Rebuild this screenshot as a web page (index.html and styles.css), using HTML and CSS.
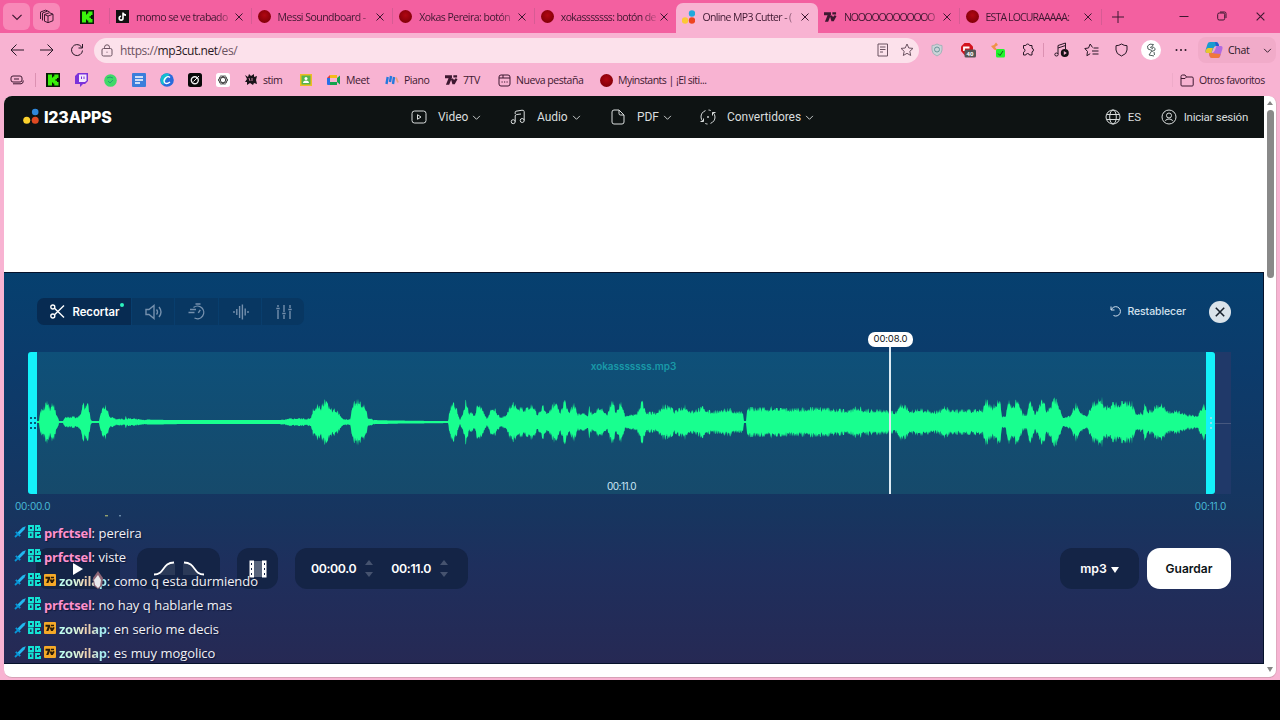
FILE: index.html
```
<!DOCTYPE html>
<html lang="es">
<head>
    <meta charset="UTF-8">
    <title>Online MP3 Cutter</title>
    <link rel="stylesheet" href="styles.css">
</head>
<body>
    <svg class="defs" width="0" height="0">
        <symbol id="x" viewBox="0 0 10 10"><path d="M1.5 1.5l7 7M8.5 1.5l-7 7"/></symbol>
        <symbol id="chev" viewBox="0 0 10 10"><path d="M1.2 3.2L5 7l3.800-3.800"/></symbol>
        <symbol id="kick" viewBox="0 0 14 14"><path d="M0 0h14v14H0z" fill="#0a1a08" stroke="none"/><path d="M2 1.500h4v3h1v-1h1.300V1.500H12.500V5H11v1.200H9.500v1.600H11V9h1.500v3.500H8.300v-2H7v-1H6v3H2z" fill="#3bf20c" stroke="none"/></symbol>
        <symbol id="seven" viewBox="0 0 14 12"><path d="M0 1h7.500v2.500L4.500 11H1l2.800-7H0zM9 1h4v2.200H9zM6.500 5.500L8.300 4l1.500 2 1.500-2L13.500 5 10.500 10.500H8z" fill="currentColor" stroke="none"/></symbol>
        <symbol id="sword" viewBox="0 0 12 12"><path d="M11.800.3L10.500 3.500 5.300 8.800 3.300 6.800 8.500 1.500z" fill="#22b8ef" stroke="none"/><path d="M1.800 5.800l4.400 4.400M3.700 8.300L1 11" stroke="#0796d8" stroke-width="1.800"/></symbol>
        <symbol id="blocks" viewBox="0 0 13 13"><path d="M1 1h4v4H1zM12 1H8v4h4V3.200h-2M1 7.500h3.500V12H1zM12 8H8v4h4V10" stroke="#13e5d5" stroke-width="1.900"/></symbol>
        <symbol id="badge" viewBox="0 0 12 12"><rect width="12" height="12" rx="1" fill="#f5a928" stroke="none"/><path d="M1.500 2.800h4.700v1.700L4.400 9H2.200l1.600-4.300H1.500zM7 2.800h3v1.400H7zM5.800 6l1.300-1 1 1.300 1-1.300 1.600.7L8.800 9H7z" fill="#2b1c08" stroke="none"/></symbol>
    </svg>

    <div class="browser">
        <div class="tabstrip">
            <div class="strip-buttons">
                <button class="strip-btn"><svg width="12" height="12"><use href="#chev"/></svg></button>
                <button class="strip-btn"><svg width="16" height="16" viewBox="0 0 16 16"><path d="M5.500 5.500l5-1.800 3.500 1.500v6.500l-5 2-3.500-1.500zM9 7l5-1.800M9 7v6.500M9 7L5.500 5.500M3.500 11.500V4l5-1.900 2 .7M1.500 10V3l5-1.800 2 .6"/></svg></button>
            </div>
            <div class="pinned"><svg width="14" height="14"><use href="#kick"/></svg></div>
            <div class="tab"><svg class="fav" width="13" height="13" viewBox="0 0 13 13"><path d="M0 0h13v13H0z" fill="#111" stroke="none"/><path d="M7 2.500v5.700a1.900 1.900 0 1 1-1.900-1.900M7 2.800q.5 2.200 3 2.300" stroke="#fff" stroke-width="1.600"/></svg><span class="title">momo se ve trabado</span><svg class="close" width="10" height="10"><use href="#x"/></svg></div>
            <div class="tab"><i class="fav instants"></i><span class="title">Messi Soundboard -</span><svg class="close" width="10" height="10"><use href="#x"/></svg></div>
            <div class="tab"><i class="fav instants"></i><span class="title">Xokas Pereira: botón</span><svg class="close" width="10" height="10"><use href="#x"/></svg></div>
            <div class="tab"><i class="fav instants"></i><span class="title long">xokasssssss: botón de</span><svg class="close" width="10" height="10"><use href="#x"/></svg></div>
            <div class="tab active"><svg class="fav" width="13" height="14" viewBox="0 0 13 14"><g stroke="none"><circle cx="10" cy="3.500" r="3.200" fill="#23a9dc"/><circle cx="3" cy="10.500" r="3.200" fill="#fcc937"/><circle cx="10" cy="10.500" r="3.200" fill="#ee4420"/></g></svg><span class="title long">Online MP3 Cutter - (</span><svg class="close" width="10" height="10"><use href="#x"/></svg></div>
            <div class="tab"><svg class="fav" width="13" height="12"><use href="#seven"/></svg><span class="title narrow">NOOOOOOOOOOOO</span><svg class="close" width="10" height="10"><use href="#x"/></svg></div>
            <div class="tab"><i class="fav instants"></i><span class="title caps">ESTA LOCURAAAAA:</span><svg class="close" width="10" height="10"><use href="#x"/></svg></div>
            <button class="new-tab"><svg width="12" height="12" viewBox="0 0 12 12"><path d="M6 0v12M0 6h12"/></svg></button>
            <div class="window-buttons">
                <svg width="10" height="10" viewBox="0 0 10 10"><path d="M.5 5.500h9"/></svg>
                <svg width="10" height="10" viewBox="0 0 10 10"><rect x=".7" y="2" width="7" height="7" rx="1.500"/><path d="M3 1h4.500Q9 1 9 2.500V7"/></svg>
                <svg width="11" height="11"><use href="#x"/></svg>
            </div>
        </div>

        <div class="toolbar">
            <svg width="14" height="14" viewBox="0 0 14 14"><path d="M14 7H1M6.500 1.500L1 7l5.500 5.500"/></svg>
            <svg width="14" height="14" viewBox="0 0 14 14"><path d="M0 7h13M7.500 1.500L13 7l-5.500 5.500"/></svg>
            <svg width="14" height="14" viewBox="0 0 14 14"><path d="M12.500 7.500A5.500 5.500 0 1 1 11.200 3.500L12.500 5M12.500 1v4H8.500"/></svg>
            <div class="address">
                <svg class="lock" width="12" height="13" viewBox="0 0 12 13"><rect x="1" y="4.500" width="10" height="7.500" rx="1.500"/><path d="M3.500 4.500V3.300a2.500 2.500 0 0 1 5 0v1.200M6 7.700v1"/></svg>
                <span class="url">https://<b>mp3cut.net</b>/es/</span>
                <svg width="12" height="14" viewBox="0 0 12 14"><path d="M1 1h9.500v12H1zM3 4h5.500M3 6.500h5.500M3 9h3"/></svg>
                <svg width="14" height="14" viewBox="0 0 14 14"><path d="M7 1l1.800 4 4.200.4-3.200 2.900.9 4.200L7 10.300l-3.700 2.200.9-4.200L1 5.400 5.200 5z"/></svg>
            </div>
            <svg width="12" height="14" viewBox="0 0 12 14"><path d="M6 1q2.500 1.500 5 1.500V7q0 4-5 6-5-2-5-6V2.500Q3.500 2.500 6 1z" fill="#cbd3d8" stroke="#a3b2b8"/><circle cx="6" cy="6.500" r="2.500" stroke="#6b959b"/></svg>
            <svg width="16" height="16" viewBox="0 0 16 16"><path d="M4.500 1h5L13 4.500V9L9.500 13h-5L1 9V4.500z" fill="#d4131d" stroke="none"/><path d="M4 9V5.500h5.500" stroke="#fff" stroke-width="1.800"/><rect x="4.500" y="7.500" width="11.500" height="8" rx="1.500" fill="#555" stroke="none"/><text x="6.500" y="14" class="count">40</text></svg>
            <svg width="16" height="16" viewBox="0 0 16 16"><path d="M1 4l3-1 2-2.500L8 3 5 5l3 4-4-1.500z" fill="#ef9148" stroke="none"/><rect x="6" y="7" width="9" height="8.500" rx="1.500" fill="#20f52c" stroke="none"/><path d="M8 11.500l2 2 3-4.500" stroke="#145c18"/></svg>
            <svg width="14" height="14" viewBox="0 0 14 14"><path d="M2.500 2.500h2.300a1.900 1.900 0 0 1 3.700 0H11v2.700a1.900 1.900 0 0 1 0 3.700V12H8.500a1.900 1.900 0 0 0-3.700 0H2.500V9.200a1.900 1.900 0 0 0 0-3.700z"/></svg>
            <i class="sep"></i>
            <svg width="15" height="16" viewBox="0 0 15 16"><path d="M4 12V3.500L11.500 1v6M4 6l7.500-2.500"/><ellipse cx="2.500" cy="12.500" rx="1.700" ry="1.500"/><circle cx="10.800" cy="11" r="4" fill="#141014" stroke="none"/><path d="M9.800 9l3 2-3 2z" fill="#f8b4d3" stroke="none"/></svg>
            <svg width="15" height="14" viewBox="0 0 15 14"><path d="M8.500 4.500L6.200 1 4.500 5 .8 5.500l2.700 3-.6 4.200 3.300-2M9.500 5h5M8 8h6.500M8.500 11h6"/></svg>
            <svg width="13" height="14" viewBox="0 0 13 14"><path d="M6.500 1q2.500 1.700 5.500 1.700V7q0 4-5.500 6Q1 11 1 7V2.700Q4 2.700 6.500 1z"/></svg>
            <span class="avatar"><svg width="14" height="16" viewBox="0 0 14 16"><path d="M3.500 4q2-3 6-1.500L7.500 5q4 0 3.500 3L8 9.500M3.500 4l.5 3 4 1.500-3 4.500 5 1M6 5l3 2M10 10l.5 3" stroke="#52615e"/></svg></span>
            <svg width="12" height="4" viewBox="0 0 12 4"><g fill="#271725" stroke="none"><circle cx="1.500" cy="2" r="1"/><circle cx="6" cy="2" r="1"/><circle cx="10.500" cy="2" r="1"/></g></svg>
            <div class="copilot">
                <svg width="18" height="18" viewBox="0 0 18 18"><g stroke="none"><path d="M5 1h6q2 0 2.500 2L14 5h-3q-2 0-3 3l-1.500 4H2Q0 12 .6 9L2.500 3Q3 1 5 1z" fill="#1a9bcf"/><path d="M2.800 7h5L6.500 12H2Q0 12 .6 9z" fill="#e8c62e"/><path d="M13 17H7q-2 0-2.500-2L4 12h3q2 0 3-3l1.500-4H16q2 0 1.400 3L15.500 14q-.5 3-2.500 3z" fill="#b16be0"/><path d="M15.500 13q-.5 4-2.500 4H7q-2 0-2.500-2L4 12h3q2 0 3 .5z" fill="#f0783e"/><path d="M10 1q3 0 3.500 2L14 5h-3z" fill="#2759d1"/></g></svg>
                <span>Chat</span>
                <svg width="9" height="9"><use href="#chev"/></svg>
            </div>
        </div>

        <div class="favorites">
            <svg width="14" height="10" viewBox="0 0 14 10"><rect x="1" y="1" width="11" height="6" rx="2"/><path d="M4 4h5M3 8.800h8q2.300 0 2.300-3.300"/></svg>
            <i class="sep"></i>
            <svg width="14" height="14"><use href="#kick"/></svg>
            <svg width="13" height="14" viewBox="0 0 13 14"><path d="M3 0h10v8l-3 3H8l-3 3v-3H0V3z" fill="#7b32d9" stroke="none"/><path d="M4 1.500h7.500v6L10 9H4z" fill="#f3e7fc" stroke="none"/><path d="M6.500 3.500V6M9 3.500V6" stroke="#7b32d9"/></svg>
            <svg width="13" height="13" viewBox="0 0 13 13"><circle cx="6.500" cy="6.500" r="6.300" fill="#3fd968" stroke="none"/><path d="M3 4q3-2 6 0M4 7l2 2 3-3" stroke="#239b75"/></svg>
            <svg width="14" height="14" viewBox="0 0 14 14"><rect width="14" height="14" rx="1" fill="#3b7edb" stroke="none"/><path d="M3 4h8M3 7h8M3 10h5" stroke="#fff" stroke-width="1.300"/></svg>
            <svg width="14" height="14" viewBox="0 0 14 14"><circle cx="7" cy="7" r="6.800" fill="#286bdc" stroke="none"/><path d="M.5 7a6.500 6.500 0 0 1 9-6L3 12Q.5 10 .5 7z" fill="#13bed0" stroke="none"/><path d="M10 4.500Q8 2.500 5.500 5T5 10q2 1.500 5-1" stroke="#fff" stroke-width="1.400"/></svg>
            <svg width="14" height="14" viewBox="0 0 14 14"><rect width="14" height="14" rx="2.500" fill="#090909" stroke="none"/><circle cx="6.800" cy="7.200" r="3.500" stroke="#eee" stroke-width="1.400"/><path d="M5.500 8.500L11 3" stroke="#eee"/></svg>
            <svg width="14" height="14" viewBox="0 0 14 14"><rect width="14" height="14" rx="2.500" fill="#fff" stroke="none"/><g stroke="#333" stroke-width=".8"><ellipse cx="7" cy="7" rx="4.600" ry="2.500"/><ellipse cx="7" cy="7" rx="4.600" ry="2.500" transform="rotate(60 7 7)"/><ellipse cx="7" cy="7" rx="4.600" ry="2.500" transform="rotate(120 7 7)"/></g></svg>
            <div class="bookmark"><svg width="14" height="14" viewBox="0 0 14 14"><path d="M1 2l3 2 1-3 2 2 3-2v3l3-1-1 4 1 4-3-1-1 2-3-2-3 2V9L1 9l2-3z" fill="#191319" stroke="none"/><path d="M5 5l1 3M8 5v3" stroke="#c887a5"/></svg>stim</div>
            <svg width="12" height="12" viewBox="0 0 12 12"><path d="M0 0h12v12H0z" fill="#ecbd24" stroke="none"/><path d="M1.500 1.500h9v9h-9z" fill="#55b54b" stroke="none"/><circle cx="6" cy="4.500" r="1.500" fill="#fff" stroke="none"/><path d="M3 9q0-2.500 3-2.500T9 9z" fill="#fff" stroke="none"/></svg>
            <div class="bookmark"><svg width="14" height="12" viewBox="0 0 14 12"><g stroke="none"><path d="M3 1h7v3H3z" fill="#f5bb19"/><path d="M0 4l3-3v7H0z" fill="#e53c36"/><path d="M0 4h3v7H1q-1 0-1-1z" fill="#276fe8"/><path d="M3 8h7v3H3zM10 4l3-2.500v9L10 8z" fill="#14a34c"/></g></svg>Meet</div>
            <div class="bookmark"><svg width="14" height="11" viewBox="0 0 14 11"><path d="M1.500 9l1.200-7M5 7l1-6M8 9l1-7" stroke="#2479dd" stroke-width="2.400"/><path d="M11 2.500l2 5" stroke="#eaa27d" stroke-width="1.800"/></svg>Piano</div>
            <div class="bookmark"><svg width="13" height="12"><use href="#seven"/></svg>7TV</div>
            <div class="bookmark"><svg width="13" height="13" viewBox="0 0 13 13"><rect x="1" y="1" width="11" height="11" rx="2"/><path d="M1 4h11M3.500 8h1.200M6 8h1.200M8.500 8h1.200M5 1v3"/></svg>Nueva pestaña</div>
            <div class="bookmark tight"><i class="instants"></i>Myinstants | ¡El siti...</div>
            <i class="sep faint"></i>
            <div class="bookmark others"><svg width="14" height="13" viewBox="0 0 14 13"><path d="M1 2.500Q1 1 2.500 1H5l1.500 2H12q1.200 0 1.200 1.200V11q0 1-1 1H2q-1 0-1-1zM1 4.500h4L6.500 3"/></svg>Otros favoritos</div>
        </div>

        <div class="viewport">
            <div class="page">
                <header>
                    <div class="logo"><svg width="17" height="17" viewBox="0 0 17 17"><g stroke="none"><circle cx="12.200" cy="4" r="3.300" fill="#2f86d9"/><circle cx="3.700" cy="12.200" r="3.500" fill="#fbd22d"/><circle cx="12.200" cy="12.200" r="3.500" fill="#e04a22"/></g></svg><span>I23APPS</span></div>
                    <nav>
                        <a><svg width="16" height="16" viewBox="0 0 16 16"><rect x="1" y="2" width="14" height="12" rx="2.500"/><path d="M6.500 5.700l3.500 2.300-3.500 2.300z"/></svg><span>Video</span><svg width="9" height="9"><use href="#chev"/></svg></a>
                        <a><svg width="16" height="16" viewBox="0 0 16 16"><circle cx="3.200" cy="12.700" r="2"/><circle cx="12.200" cy="11.500" r="2"/><path d="M5.200 12.700V7M5.200 5V3.200q0-.8.800-1l6-1q2.200-.2 2.200 1.500v8.800M5.200 7q0-1.300 1.500-1.500L11 5"/></svg><span>Audio</span><svg width="9" height="9"><use href="#chev"/></svg></a>
                        <a><svg width="16" height="16" viewBox="0 0 16 16"><path d="M9 1H4Q2 1 2 3v10q0 2 2 2h8q2 0 2-2V6zM9 1v3.500Q9 6 10.500 6H14"/></svg><span>PDF</span><svg width="9" height="9"><use href="#chev"/></svg></a>
                        <a><svg width="16" height="16" viewBox="0 0 16 16"><path d="M5.500 1.600Q1 3.500 1 8q0 2.500 2 4.500M.5 12.500h3v-3M10.500 14.400Q15 12.500 15 8q0-2.500-2-4.500M15.500 3.500h-3v3M8.500 1q1.300.1 2.200.5M7.500 15q-1.300-.1-2.200-.5"/><circle cx="8" cy="8" r=".6"/></svg><span>Convertidores</span><svg width="9" height="9"><use href="#chev"/></svg></a>
                    </nav>
                    <div class="account">
                        <svg width="16" height="16" viewBox="0 0 16 16"><circle cx="8" cy="8" r="7"/><ellipse cx="8" cy="8" rx="3.300" ry="7"/><path d="M1.600 5.500h12.800M1.600 10.500h12.800"/></svg><span>ES</span>
                        <svg class="user" width="16" height="16" viewBox="0 0 16 16"><circle cx="8" cy="8" r="7"/><circle cx="8" cy="6.500" r="2.500"/><path d="M4.500 12q0-2 3.500-2t3.500 2"/></svg><span>Iniciar sesión</span>
                    </div>
                </header>
                <div class="ad"></div>
                <main class="editor">
                    <div class="tools">
                        <div class="modes">
                            <div class="mode selected"><svg width="15" height="15" viewBox="0 0 15 15"><circle cx="2.800" cy="3" r="2"/><circle cx="2.800" cy="12" r="2"/><path d="M4.500 4.300L14 13.500M4.500 10.700L14 1.500"/></svg>Recortar</div>
                            <div class="mode"><svg width="18" height="16" viewBox="0 0 18 16"><path d="M1 5.500h3L9 1.500v13L4 10.500H1zM11.500 5.500q2 2.500 0 5M14 3q4 5 0 10"/></svg></div>
                            <div class="mode"><svg width="18" height="18" viewBox="0 0 18 18"><path d="M7.500 1h5M5.500 4.500A6.300 6.300 0 1 1 6.500 15M2 6.500h6M.5 9.500h6M10.300 9.800l2-3"/></svg></div>
                            <div class="mode"><svg width="16" height="16" viewBox="0 0 16 16"><path d="M1 7v2M3.800 5v6M6.600 2v12M9.400 .5v15M12.200 4.500v7M15 7v2"/></svg></div>
                            <div class="mode"><svg width="16" height="16" viewBox="0 0 16 16"><path d="M2 1v2M2 6v9M8 1v7M8 11v4M14 1v3M14 7v8M.3 4.500h3.400M6.300 9.500h3.400M12.300 5.500h3.400"/></svg></div>
                        </div>
                        <div class="reset"><svg width="12" height="12" viewBox="0 0 12 12"><path d="M1 .5v3.500h3.500M1.300 3.800A4.700 4.700 0 1 1 3.500 9.500"/></svg>Restablecer</div>
                        <button class="dismiss"><svg width="12" height="12"><use href="#x"/></svg></button>
                    </div>
                    <div class="track">
                        <div class="handle left"><i></i><i></i></div>
                        <div class="selection">
                            <span class="filename">xokasssssss.mp3</span>
                            <svg id="wave" width="1169" height="60" viewBox="0 0 1169 60"></svg>
                            <span class="length">00:11.0</span>
                        </div>
                        <div class="handle right"><i></i></div>
                        <div class="rest"></div>
                        <div class="playhead"><span>00:08.0</span></div>
                    </div>
                    <div class="times"><span>00:00.0</span><span>00:11.0</span></div>
                    <div class="controls">
                        <button class="ctl play"><svg width="12" height="14" viewBox="0 0 12 14"><path d="M1 1l10 6-10 6z" fill="#fff" stroke="none"/></svg></button>
                        <button class="ctl fades">
                            <svg width="22" height="15" viewBox="0 0 22 15"><path d="M6 14q5-3 8-12h8v12z" fill="#fff" fill-opacity=".1" stroke="none"/><path d="M1 13.500C12 13.500 9 1.500 21 1.500"/></svg>
                            <svg width="22" height="15" viewBox="0 0 22 15"><path d="M0 2h8q3 9 8 12H0z" fill="#fff" fill-opacity=".1" stroke="none"/><path d="M1 1.500C13 1.500 10 13.500 21 13.500"/></svg>
                        </button>
                        <button class="ctl clip"><svg width="18" height="18" viewBox="0 0 18 18"><path d="M5 1h8v16H5z" fill="#fff" fill-opacity=".3" stroke="none"/><path d="M.5.5h4.500v17H.5zM13 .5h4.500v17H13z" fill="#fff" stroke="none"/><path d="M2.500 3v13M15.500 3v13" stroke="#132347" stroke-dasharray="2 3"/></svg></button>
                        <div class="ctl range">
                            <span>00:00.0</span><div class="spin"><i></i><i></i></div>
                            <span>00:11.0</span><div class="spin"><i></i><i></i></div>
                        </div>
                        <button class="ctl format">mp3<i></i></button>
                        <button class="save">Guardar</button>
                    </div>
                </main>
                <div class="page-end"></div>
            </div>
            <div class="scrollbar"><i class="up"></i><div class="thumb"></div><i class="down"></i></div>
        </div>
    </div>

    <div class="chat">
        <p><svg width="12" height="12"><use href="#sword"/></svg><svg width="13" height="13"><use href="#blocks"/></svg><b class="pink">prfctsel</b><span>: pereira</span></p>
        <p><svg width="12" height="12"><use href="#sword"/></svg><svg width="13" height="13"><use href="#blocks"/></svg><b class="pink">prfctsel</b><span>: viste</span></p>
        <p><svg width="12" height="12"><use href="#sword"/></svg><svg width="13" height="13"><use href="#blocks"/></svg><svg width="12" height="12"><use href="#badge"/></svg><b class="shine">zowilap</b><span>: como q esta durmiendo</span></p>
        <p><svg width="12" height="12"><use href="#sword"/></svg><svg width="13" height="13"><use href="#blocks"/></svg><b class="pink">prfctsel</b><span>: no hay q hablarle mas</span></p>
        <p><svg width="12" height="12"><use href="#sword"/></svg><svg width="13" height="13"><use href="#blocks"/></svg><svg width="12" height="12"><use href="#badge"/></svg><b class="shine">zowilap</b><span>: en serio me decis</span></p>
        <p><svg width="12" height="12"><use href="#sword"/></svg><svg width="13" height="13"><use href="#blocks"/></svg><svg width="12" height="12"><use href="#badge"/></svg><b class="shine">zowilap</b><span>: es muy mogolico</span></p>
    </div>
    <svg class="scrolled" width="18" height="2" viewBox="0 0 18 2"><path d="M0 .8h3" stroke="#c9cf76"/><path d="M14 .8h2" stroke="#8fb0c8"/></svg>
    <svg class="cursor" width="12" height="18" viewBox="0 0 12 18"><path d="M6 0l5 7-1 8-4 3-4-3-1-8z" fill="#8d6575" stroke="none"/><path d="M6 4l3 5-1 6-2 2-3-3-1-5z" fill="#e8e9ed" stroke="none"/></svg>

    <script src="wave.js"></script>
</body>
</html>
```
FILE: styles.css
```
* { box-sizing: border-box; }
body {
    margin: 0;
    width: 1280px;
    height: 720px;
    overflow: hidden;
    background: #000;
    font-family: "Open Sans", "Noto Sans", sans-serif;
    font-size: 11px;
    color: #3d1830;
}
svg {
    display: block;
    flex: none;
    fill: none;
    stroke: currentColor;
    stroke-width: 1;
}
.defs { position: absolute; }
button {
    border: 0;
    padding: 0;
    background: none;
    color: inherit;
    font: inherit;
    display: flex;
    align-items: center;
    justify-content: center;
}
.browser {
    height: 680px;
    background: #f8b3d2;
    display: flex;
    flex-direction: column;
}

/* tabs */
.tabstrip {
    height: 33px;
    flex: none;
    background: #f360a0;
    display: flex;
    align-items: center;
    white-space: nowrap;
}
.strip-buttons { display: flex; gap: 3px; width: 64px; padding-left: 3px; }
.strip-btn {
    width: 27px;
    height: 27px;
    border-radius: 6px;
    background: #f889b8;
}
.pinned { width: 46px; padding-left: 16px; }
.tab {
    width: 141.6px;
    height: 30px;
    margin-top: 3px;
    padding: 0 8px 3px 6px;
    display: flex;
    align-items: center;
    position: relative;
}
.tab::before {
    content: "";
    position: absolute;
    left: -1px;
    top: 5px;
    width: 1px;
    height: 16px;
    background: #d75b94;
}
.tab .fav { width: 13px; flex: none; }
.tab .title {
    flex: 1;
    margin-left: 7px;
    font-size: 10.5px;
    letter-spacing: -0.52px;
    -webkit-mask-image: linear-gradient(90deg, #000 85%, rgba(0, 0, 0, 0.2));
    mask-image: linear-gradient(90deg, #000 85%, rgba(0, 0, 0, 0.2));
}
.tab .title.long { letter-spacing: -0.62px; }
.tab .title.narrow { letter-spacing: -1.2px; }
.tab .title.caps { letter-spacing: -0.85px; }
.tab .close { margin-left: 3px; }
.tab.active {
    background: #f8b3d2;
    border-radius: 7px 7px 0 0;
}
.tab.active::before, .tab.active + .tab::before { display: none; }
.instants {
    display: block;
    width: 13px;
    height: 13px;
    border-radius: 50%;
    background: radial-gradient(circle at 50% 40%, #b00712, #850009 70%);
}
.new-tab { width: 33px; height: 16px; border-left: 1px solid #d75b94; }
.window-buttons {
    flex: 1;
    display: flex;
    justify-content: flex-end;
    gap: 28px;
    padding-right: 14px;
}

/* toolbar */
.toolbar {
    height: 34px;
    flex: none;
    display: grid;
    grid-template-columns: 30px 30px 30px 829px 32px 29px 31px 29px 3px 33px 27px 32px 27px 34px 78px;
    padding-left: 2px;
    align-items: center;
    justify-items: center;
    color: #271725;
}
.address {
    width: 825px;
    height: 25px;
    border-radius: 13px;
    background: #fce1eb;
    display: flex;
    align-items: center;
    padding: 0 5px 0 7px;
    color: #6b5361;
}
.address svg:last-child { margin-left: 11px; }
.url { flex: 1; margin-left: 7px; font-size: 12px; letter-spacing: -0.42px; }
.url b { font-weight: 400; color: #281822; }
.count { font-size: 6px; font-weight: 700; fill: #fff; stroke: none; }
.sep { width: 1px; height: 14px; background: #dc91b2; }
.sep.faint { background: #eeabc9; }
.avatar {
    width: 20px;
    height: 20px;
    border-radius: 50%;
    background: #fff;
    display: flex;
    align-items: center;
    justify-content: center;
}
.copilot {
    width: 78px;
    height: 26px;
    border-radius: 8px;
    background: #f1abc9;
    display: flex;
    align-items: center;
    padding: 0 4px 0 7px;
}
.copilot span { flex: 1; margin-left: 5px; font-size: 10.5px; letter-spacing: -0.3px; }

/* favorites */
.favorites {
    height: 29px;
    flex: none;
    padding: 0 0 3px 2px;
    display: grid;
    grid-template-columns: 29px 8px 28px 29px 28px 29px 28px 28px 28px 54px 29px 58px 60px 53px 101px 576px 8px 92px;
    align-items: center;
    justify-items: center;
    font-size: 10.5px;
    white-space: nowrap;
}
.bookmark {
    justify-self: start;
    margin-left: 7px;
    display: flex;
    align-items: center;
    gap: 5px;
    letter-spacing: -0.45px;
}
.bookmark.tight { margin-left: 8px; letter-spacing: -0.53px; }
.bookmark.others { margin-left: 4px; letter-spacing: -0.5px; }

/* viewport */
.viewport {
    height: 582px;
    margin-left: 4px;
    width: 1273px;
    border-radius: 8px;
    overflow: hidden;
    background: #fff;
    display: flex;
    border-right: 1px solid #e0a8bf;
    border-bottom: 1px solid #d7a1b7;
}
.page {
    width: 1260px;
    display: flex;
    flex-direction: column;
    font-family: Inter, sans-serif;
    color: #fff;
}
header {
    height: 42px;
    flex: none;
    background: #0e1313;
    display: flex;
    align-items: center;
    color: #d9dddd;
    font-family: Roboto, sans-serif;
    font-size: 12px;
    letter-spacing: -0.05px;
}
.logo { width: 406px; padding-left: 19px; margin-top: -1px; display: flex; align-items: center; color: #fff; }
.logo span {
    margin-left: 4px;
    font-family: Inter, sans-serif;
    font-size: 16px;
    font-weight: 800;
    letter-spacing: -0.2px;
}
nav {
    display: grid;
    grid-template-columns: 99px 100px 90px 120px;
}
nav a { display: flex; align-items: center; padding-left: 1px; }
nav a span { margin: 0 4px 0 11px; }
.account { flex: 1; display: flex; align-items: center; justify-content: flex-end; padding-right: 16px; }
.account span { margin-left: 7px; font-size: 11.5px; letter-spacing: -0.25px; }
.account .user { margin-left: 20px; }
.ad { height: 134px; flex: none; }
.editor {
    height: 392px;
    flex: none;
    border: 1px solid #06122b;
    border-left: 0;
    background: linear-gradient(#06406f 0%, #0c3b6b 25%, #17355f 62%, #1e2f5d 75%, #262954 100%);
    padding: 25px 32px 0 24px;
    display: flex;
    flex-direction: column;
}
.tools { height: 27px; display: flex; align-items: center; padding-left: 9px; }
.modes {
    width: 267px;
    height: 27px;
    border-radius: 7px;
    overflow: hidden;
    display: flex;
    gap: 1px;
}
.mode {
    flex: 1;
    background: #083762;
    display: flex;
    align-items: center;
    justify-content: center;
    padding-left: 2px;
    color: #7590ad;
}
.mode svg { stroke-width: 1.400; }
.mode.selected {
    flex: none;
    width: 94px;
    gap: 7px;
    background: #072b52;
    color: #fff;
    font-size: 11.300px;
    font-weight: 600;
    position: relative;
}
.mode.selected::after {
    content: "";
    position: absolute;
    right: 7px;
    top: 5px;
    width: 4px;
    height: 4px;
    border-radius: 50%;
    background: #2cf3bd;
}
.reset {
    flex: 1;
    display: flex;
    align-items: center;
    justify-content: flex-end;
    gap: 5px;
    margin-right: 23px;
    font-size: 10.500px;
    letter-spacing: -0.1px;
    font-weight: 500;
    color: #d3e1ee;
}
.dismiss {
    width: 22px;
    height: 22px;
    border-radius: 50%;
    background: #dae3ea;
    color: #17202b;
}
.dismiss svg { stroke-width: 1.300; }
.track {
    width: 1203px;
    height: 142px;
    margin-top: 27px;
    flex: none;
    display: flex;
    position: relative;
}
.handle {
    width: 9px;
    background: #14f1fa;
    border-radius: 3px 0 0 3px;
    display: flex;
    align-items: center;
    justify-content: center;
    gap: 2px;
}
.handle.right { border-radius: 0 3px 3px 0; }
.handle i {
    width: 2px;
    height: 12px;
    background: repeating-linear-gradient(#075777 0 2px, transparent 2px 5px);
}
.handle.right i { background: repeating-linear-gradient(#8ce1f0 0 2px, transparent 2px 5px); }
.selection {
    width: 1169px;
    background: linear-gradient(#0e5079, #164a6b);
    display: flex;
    flex-direction: column;
    align-items: center;
}
.filename {
    margin: 7px 0 0 24px;
    height: 14px;
    line-height: 14px;
    font-weight: 600;
    font-size: 10px;
    letter-spacing: -0.05px;
    color: #1999a8;
}
#wave { margin-top: 19px; stroke: none; }
.length { margin-top: 27px; line-height: 14px; font-size: 10px; letter-spacing: -0.5px; color: #cce8f8; }
.rest {
    flex: 1;
    background: linear-gradient(#46587f, #46587f) 0 50% / 100% 1px no-repeat #203969;
}
.playhead {
    position: absolute;
    left: 861px;
    top: -6px;
    bottom: 0;
    width: 2px;
    background: #dcebf3;
}
.playhead span {
    position: absolute;
    left: -21px;
    top: -14px;
    width: 45px;
    height: 15px;
    border-radius: 7px;
    background: #fff;
    color: #111820;
    font-size: 9.500px;
    line-height: 13px;
    letter-spacing: -0.15px;
    text-align: center;
}
.times {
    width: 1211px;
    margin: 5px 0 0 -13px;
    display: flex;
    justify-content: space-between;
    font-size: 10px;
    line-height: 14px;
    letter-spacing: -0.2px;
    color: #48b9d6;
}
.controls { display: flex; margin: 35px 0 0 8px; height: 41px; }
.ctl { height: 41px; border-radius: 12px; background: #142446; }
.play { width: 84px; }
.fades { width: 83px; margin-left: 17px; gap: 8px; }
.fades path { stroke-width: 1.800; }
.clip { width: 41px; margin-left: 17px; }
.range {
    width: 173px;
    margin-left: 17px;
    padding-left: 16px;
    display: flex;
    align-items: center;
    font-size: 12.300px;
    font-weight: 600;
    letter-spacing: -0.35px;
}
.spin { margin: 0 18px 0 9px; display: flex; flex-direction: column; gap: 7px; }
.spin i { border: 4px solid transparent; border-top: 0; border-bottom: 5px solid #46536f; }
.spin i + i { border-bottom: 0; border-top: 5px solid #46536f; }
.format { width: 79px; margin-left: auto; gap: 4px; font-size: 12.300px; font-weight: 600; }
.format i { margin-top: 3px; border: 4px solid transparent; border-bottom: 0; border-top: 6px solid #fff; }
.save {
    width: 84px;
    height: 41px;
    margin-left: 8px;
    border-radius: 13px;
    background: #fff;
    color: #0c1316;
    font-size: 12px;
    font-weight: 600;
}
.scrollbar {
    width: 12px;
    display: flex;
    flex-direction: column;
    align-items: center;
    padding: 5px 0;
}
.thumb { width: 7px; height: 168px; margin-top: 5px; border-radius: 4px; background: #898989; }
.scrollbar .up { border: 3px solid transparent; border-top: 0; border-bottom: 4px solid #858585; }
.scrollbar .down { margin-top: auto; border: 3px solid transparent; border-bottom: 0; border-top: 5px solid #858585; }

/* stream chat drawn over the window */
.chat {
    position: absolute;
    left: 14px;
    top: 520.5px;
    font-size: 13px;
    color: #f1f1f5;
}
.chat p {
    margin: 0;
    height: 24.100px;
    line-height: 24px;
    display: flex;
    align-items: center;
    white-space: pre;
    letter-spacing: -0.08px;
    text-shadow: 1px 1px 1px #10183a;
}
.chat svg { margin: -2px 2px 0 0; }
.chat svg + svg + svg { margin-left: 1px; }
.chat svg + b { margin-left: 1px; }
.chat b { letter-spacing: -0.25px; }
.chat b + span { word-spacing: 0.300px; }
.pink { color: #ff91cd; }
.shine {
    background: linear-gradient(90deg, #b9fff4, #d9f6dc 35%, #f6cba7 60%, #a9edf0 85%);
    -webkit-background-clip: text;
    background-clip: text;
    color: transparent;
    text-shadow: none;
}
.scrolled { position: absolute; left: 105px; top: 515px; }
.cursor { position: absolute; left: 92px; top: 571px; }
```
FILE: wave.js
```
// envelope of the clip: x in the window, half height in px
const points = [
    [37,1],[39,1],[40,12],[43,15],[47,23],[50,16],[53,23],[56,11],[58,6],[59,1],[63,1],[65,6],[78,6],[81,10],[82.5,23],[85,17],[88,20],[91,2],[92,1],
    [99,1],[100,8],[102,15],[106,19],[110,6],[116,4],[125,3.5],[126,8],[127,4],[133,4],[140,3],[147,2.5],[180,2],[280,2],[288,4],[306,4],
    [311,4],[313,15],[317,20],[320,16],[325,24],[330,16],[337,13],[343,4],[350,3],[353,21],[358,25],[362,19],[365,19],[368,5],[375,2],[400,1.5],[448,1],
    [450,17],[454,21],[457,14],[460,2],[463,11],[466,26],[469,11],[475,9],[478,22],[483,12],[487,4],[493,18],[500,6],[505,7],[512,22],[518,17],[527,15],
    [533,21],[537,9],[543,18],[548,10],[555,24],[560,10],[565,25],[569,12],[574,21],[578,9],[588,9],[589,19],[592,8],[600,18],[607,9],[612,26],[616,11],
    [621,22],[625,8],[637,9],[642,24],[647,11],[657,11],[663,19],[670,17],[675,12],[685,19],[692,12],[703,17],[708,13],[720,12],[729,16],[733,12],[743,11],
    [744,1],[746,1],[747,16],[770,15],[771,18],[774,15],[790,15],[814,16],[830,15],[850,13],[858,18],[864,14],[880,14],[890,12],[897,12],[902,22],[910,13],
    [920,15],[937,12],[945,18],[950,13],[983,14],[986,25],[992,17],[1000,27],[1002,7],[1006,8],[1008,25],[1013,19],[1018,27],[1023,9],[1027,9],[1029,25],
    [1035,10],[1043,26],[1047,12],[1055,27],[1061,14],[1063,5],[1070,7],[1076,21],[1081,11],[1087,7],[1093,22],[1102,27],[1105,17],[1112,21],[1120,22],[1132,23],
    [1135,11],[1143,10],[1145,23],[1147,11],[1161,21],[1167,12],[1177,13],[1187,8],[1198,8],[1203,20],[1206,18]
];

let seed = 7;
function rand() {
    seed = (seed * 16807) % 2147483647;
    return seed / 2147483647;
}

let upper = [];
let lower = [];
let k = 0;
for (let x = 37; x <= 1206; x += 0.5) {
    while (k < points.length - 2 && points[k + 1][0] < x) k++;
    const [x0, a0] = points[k];
    const [x1, a1] = points[k + 1];
    let amp = a0 + (a1 - a0) * (x - x0) / (x1 - x0);
    // every third pixel or so peaks above its neighbours
    if (amp > 2.5) amp *= rand() > 0.7 ? 0.95 : 0.64 + rand() * 0.2;
    upper.push(`${x - 37},${(30.1 - amp).toFixed(1)}`);
    lower.unshift(`${x - 37},${(30.1 + amp).toFixed(1)}`);
}
document.getElementById('wave').innerHTML =
    `<polygon fill="#18ff8f" points="${upper.join(' ')} ${lower.join(' ')}"/>`;
```
